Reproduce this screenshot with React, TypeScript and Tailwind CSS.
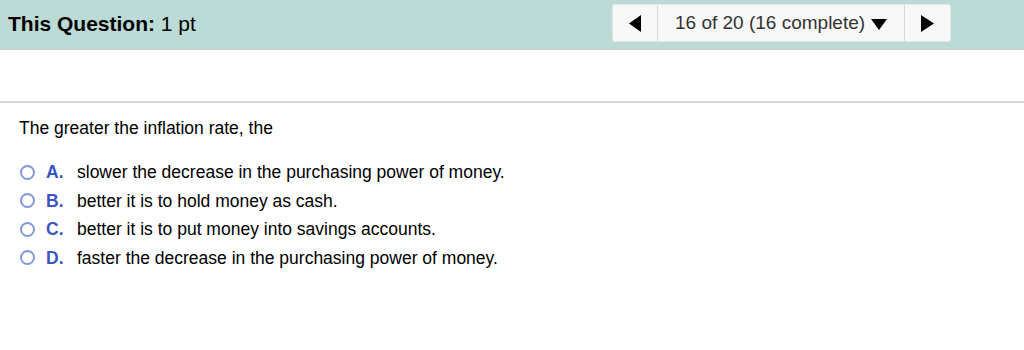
export default function App() {
  const options = [
    { letter: "A.", text: "slower the decrease in the purchasing power of money." },
    { letter: "B.", text: "better it is to hold money as cash." },
    { letter: "C.", text: "better it is to put money into savings accounts." },
    { letter: "D.", text: "faster the decrease in the purchasing power of money." },
  ];

  return (
    <div
      className="w-[1024px] h-[350px] bg-white text-black overflow-hidden"
      style={{ fontFamily: '"Liberation Sans", Arial, sans-serif' }}
    >
      {/* header bar */}
      <div className="h-[50px] bg-[#bcdad6] border-b border-[#c9cfd0] flex items-start justify-between">
        <div className="pl-2 pt-[11px] text-[21px] leading-[26px]">
          <span className="font-bold">This Question:</span> 1 pt
        </div>
        <div className="mt-1 mr-[73px] flex h-[38px] bg-[#f8f8f8] rounded-[3px] border border-[#e4e8e8]">
          <button className="w-[45px] flex items-center justify-center border-r border-[#d8d8d8]">
            <svg width="12" height="17" viewBox="0 0 12 17">
              <polygon points="12,0 12,17 0,8.5" fill="#000" />
            </svg>
          </button>
          <button className="w-[247px] flex items-center pl-[17px] gap-[6px] text-[19px] text-[#333] border-r border-[#d8d8d8]">
            16 of 20 (16 complete)
            <svg width="16" height="11" viewBox="0 0 16 11" className="mt-[2px]">
              <polygon points="0,0 16,0 8,11" fill="#000" />
            </svg>
          </button>
          <button className="w-[45px] flex items-center justify-center">
            <svg width="13" height="17" viewBox="0 0 13 17">
              <polygon points="0,0 13,8.5 0,17" fill="#000" />
            </svg>
          </button>
        </div>
      </div>

      {/* divider */}
      <div className="mt-[51px] h-[2px] bg-[#d5d7e3]" />

      {/* question */}
      <div className="pl-[19px] pt-[14px] text-[17.5px] leading-[22px]">
        The greater the inflation rate, the
      </div>

      <div className="pl-[20px] pt-[19px] flex flex-col">
        {options.map((o) => (
          <div key={o.letter} className="flex items-center h-[28.5px] text-[17.5px]">
            <span className="shrink-0 w-[15px] h-[15px] rounded-full border-2 border-[#8397da] bg-white" />
            <span className="ml-[11px] w-[31px] font-bold text-[#3a55c4]">{o.letter}</span>
            <span>{o.text}</span>
          </div>
        ))}
      </div>
    </div>
  );
}
